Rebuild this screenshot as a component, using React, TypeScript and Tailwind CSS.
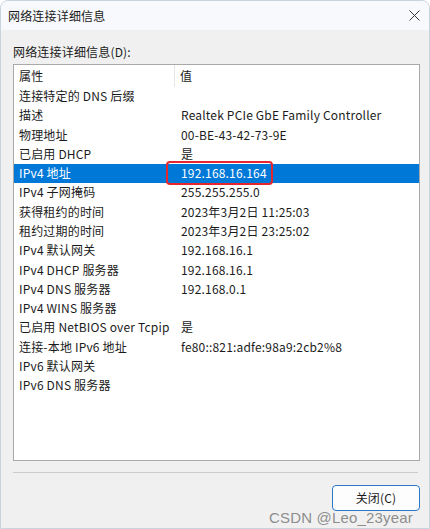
const rows: [string, string][] = [
  ["连接特定的 DNS 后缀", ""],
  ["描述", "Realtek PCIe GbE Family Controller"],
  ["物理地址", "00-BE-43-42-73-9E"],
  ["已启用 DHCP", "是"],
  ["IPv4 地址", "192.168.16.164"],
  ["IPv4 子网掩码", "255.255.255.0"],
  ["获得租约的时间", "2023年3月2日 11:25:03"],
  ["租约过期的时间", "2023年3月2日 23:25:02"],
  ["IPv4 默认网关", "192.168.16.1"],
  ["IPv4 DHCP 服务器", "192.168.16.1"],
  ["IPv4 DNS 服务器", "192.168.0.1"],
  ["IPv4 WINS 服务器", ""],
  ["已启用 NetBIOS over Tcpip", "是"],
  ["连接-本地 IPv6 地址", "fe80::821:adfe:98a9:2cb2%8"],
  ["IPv6 默认网关", ""],
  ["IPv6 DNS 服务器", ""],
];

const SELECTED = 4;

export default function App() {
  return (
    <div
      className="relative flex h-[529px] w-[430px] flex-col overflow-hidden rounded-t-[8px] border border-[#c9d3de] bg-[#f0f0f0] text-[12px] tracking-[0.18px] text-[#1b1b1b]"
      style={{ fontFamily: '"Noto Sans CJK SC", "Noto Sans", sans-serif' }}
    >
      {/* title bar */}
      <div className="flex h-[29px] shrink-0 items-center justify-between bg-[#f7f9fc] pl-[7px] pr-[9px]">
        <span className="leading-none">网络连接详细信息</span>
        <svg width="11" height="11" viewBox="0 0 11 11">
          <path d="M0.5 0.5 L10.5 10.5 M10.5 0.5 L0.5 10.5" stroke="#333" strokeWidth="1" />
        </svg>
      </div>

      <div className="flex flex-1 flex-col pl-[12px] pr-[10px]">
        <div className="mt-[14px] h-[16px] leading-[16px]">网络连接详细信息(D):</div>

        <div className="mt-[4px] h-[397px] w-[407px] border border-[#a9a9a9] bg-white">
          <div className="flex h-[21.5px] items-center">
            <div className="flex h-full w-[161px] items-center border-r border-[#e5e5e5] pl-[5px]">属性</div>
            <div className="pl-[5px]">值</div>
          </div>
          {rows.map(([name, value], i) => {
            const sel = i === SELECTED;
            return (
              <div
                key={name}
                className={`flex h-[19.27px] items-center whitespace-nowrap ${sel ? "bg-[#0078d7] text-white" : ""}`}
              >
                <div className="w-[162px] pl-[5px]">{name}</div>
                <div className="relative pl-[5px]">
                  {value}
                  {sel && (
                    <div className="absolute left-[-10px] top-[-3px] h-[24px] w-[107px] rounded-[4px] border-[2.5px] border-[#e5262d]" />
                  )}
                </div>
              </div>
            );
          })}
        </div>

        <div className="mt-[11px] h-px w-[405px] bg-[#cccccc]" />

        <div className="mt-[12px] mr-[-1px] flex justify-end">
          <button
            type="button"
            className="h-[26px] w-[88px] rounded-[4px] border border-[#2a78c6] bg-[#fdfdfd] text-[12px] tracking-[0.18px] text-[#1b1b1b]"
          >
            关闭(C)
          </button>
        </div>
      </div>

      <div
        className="absolute bottom-[3px] right-[16px] text-[15px] leading-none text-[#808080]/90"
        style={{ fontFamily: '"Liberation Sans", Arial, sans-serif' }}
      >
        CSDN @Leo_23year
      </div>
    </div>
  );
}
